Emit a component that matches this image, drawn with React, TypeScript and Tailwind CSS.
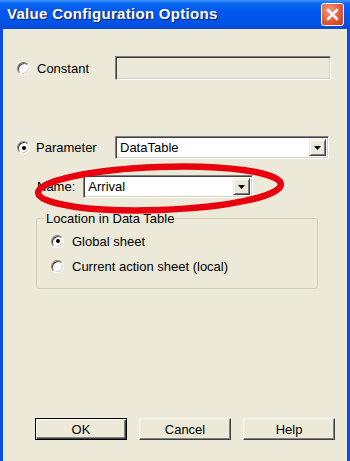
import React from 'react';

function Radio({ checked }: { checked?: boolean }) {
  return (
    <span className="relative inline-flex w-[13px] h-[13px] shrink-0 rounded-full bg-white border border-t-[#808080] border-l-[#808080] border-b-white border-r-white shadow-[inset_1px_1px_0_#404040,inset_-1px_-1px_0_#d4d0c8] items-center justify-center">
      {checked && <span className="w-[4px] h-[4px] rounded-full bg-black" />}
    </span>
  );
}

function Combo({ value, width }: { value: string; width: string }) {
  return (
    <div className={`${width} h-[23px] flex items-center bg-white border border-t-[#808080] border-l-[#808080] border-b-white border-r-white shadow-[inset_1px_1px_0_#404040,inset_-1px_-1px_0_#d4d0c8] pl-[4px] pr-[2px]`}>
      <span className="flex-1 text-[13px] text-black leading-none">{value}</span>
      <span className="w-[17px] h-[17px] flex items-center justify-center bg-[#ECE9D8] border border-t-[#ECE9D8] border-l-[#ECE9D8] border-b-[#404040] border-r-[#404040] shadow-[inset_1px_1px_0_#fff,inset_-1px_-1px_0_#808080]">
        <svg width="7" height="4" viewBox="0 0 7 4">
          <polygon points="0,0 7,0 3.5,4" fill="#000" />
        </svg>
      </span>
    </div>
  );
}

function Btn({ label, isDefault }: { label: string; isDefault?: boolean }) {
  return (
    <button
      className={`w-[92px] h-[22px] bg-[#ECE9D8] text-[13px] text-black leading-none ${
        isDefault
          ? 'border border-black shadow-[inset_1px_1px_0_#fff,inset_-1px_-1px_0_#404040,inset_-2px_-2px_0_#808080]'
          : 'border border-t-white border-l-white border-b-[#404040] border-r-[#404040] shadow-[inset_-1px_-1px_0_#808080]'
      }`}
    >
      {label}
    </button>
  );
}

export default function App() {
  return (
    <div className="w-[350px] h-[461px] flex flex-col overflow-hidden bg-[#0a4ee0] font-['Liberation_Sans',Arial,sans-serif]">
      {/* title bar */}
      <div className="h-[29px] shrink-0 flex items-center justify-between pl-[7px] pr-[6px] bg-[linear-gradient(to_bottom,#3d95ff_0%,#0a66f0_12%,#0058ee_40%,#0053e6_80%,#0a4ad2_100%)]">
        <span className="text-white font-bold text-[15px] tracking-[0.3px] [text-shadow:1px_1px_0_#0a1e6a]">
          Value Configuration Options
        </span>
        <span className="w-[23px] h-[23px] rounded-[3px] border border-white flex items-center justify-center bg-[radial-gradient(circle_at_35%_30%,#f29a7c_0%,#e2593a_55%,#c23a1c_100%)]">
          <svg width="13" height="13" viewBox="0 0 13 13">
            <path d="M2 2 L11 11 M11 2 L2 11" stroke="#fff" strokeWidth="2.6" strokeLinecap="round" />
          </svg>
        </span>
      </div>

      {/* body */}
      <div className="relative flex-1 mx-[3px] bg-[#ECE9D8] flex flex-col text-black">
        <div className="mt-[27px] h-[24px] flex items-center">
          <div className="w-[112px] pl-[14px] flex items-center gap-[7px]">
            <Radio />
            <span className="text-[13px] leading-none">Constant</span>
          </div>
          <div className="w-[216px] h-[24px] bg-[#ECE9D8] border border-t-[#808080] border-l-[#808080] border-b-white border-r-white shadow-[inset_1px_1px_0_#404040,inset_-1px_-1px_0_#d4d0c8]" />
        </div>

        <div className="mt-[56px] h-[23px] flex items-center">
          <div className="w-[112px] pl-[14px] flex items-center gap-[6px]">
            <Radio checked />
            <span className="text-[13px] leading-none">Parameter</span>
          </div>
          <Combo value="DataTable" width="w-[214px]" />
        </div>

        <div className="mt-[16px] h-[23px] flex items-center pl-[34px] gap-[8px]">
          <span className="text-[13px] leading-none">Name:</span>
          <Combo value="Arrival" width="w-[170px]" />
        </div>

        <fieldset className="mt-[13px] ml-[33px] w-[282px] h-[78px] border border-[#d0d0bf] rounded-[3px] pl-[7px] pr-0 pt-[5px]">
          <legend className="px-[2px] text-[13px] leading-[15px]">Location in Data Table</legend>
          <div className="h-[20px] flex items-center gap-[8px] pl-[7px]">
            <Radio checked />
            <span className="text-[13px] leading-none">Global sheet</span>
          </div>
          <div className="mt-[5px] h-[20px] flex items-center gap-[8px] pl-[7px]">
            <Radio />
            <span className="text-[13px] leading-none">Current action sheet (local)</span>
          </div>
        </fieldset>

        <div className="mt-auto mb-[21px] flex gap-[12px] pl-[32px]">
          <Btn label="OK" isDefault />
          <Btn label="Cancel" />
          <Btn label="Help" />
        </div>

        {/* red marker ellipse drawn over the dialog */}
        <svg className="absolute left-0 top-0 pointer-events-none" width="344" height="432" viewBox="0 0 344 432">
          <ellipse cx="156.5" cy="159.5" rx="121.5" ry="21.5" fill="none" stroke="#e8000e" strokeWidth="6.5" transform="rotate(-2 156.5 159.5)" />
        </svg>
      </div>
    </div>
  );
}
